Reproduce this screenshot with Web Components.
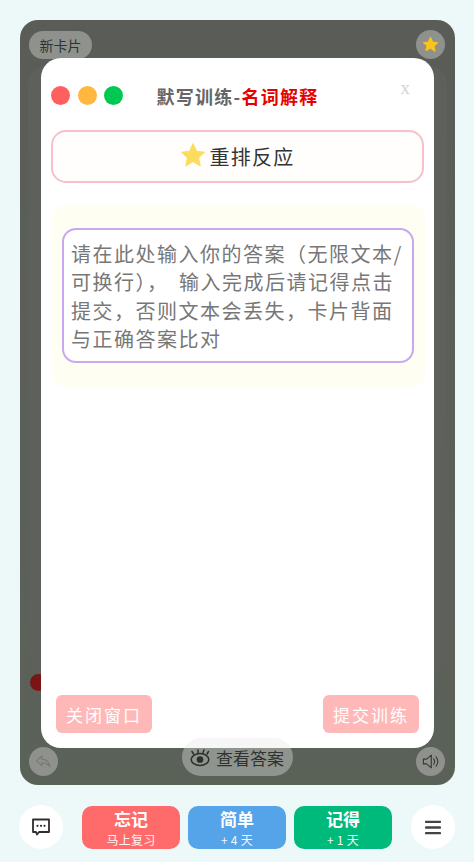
<!DOCTYPE html>
<html lang="zh"><head><meta charset="utf-8"><title>默写训练</title>
<style>
html,body{margin:0;padding:0;background:#edf9f8}
body{font-family:"Noto Sans CJK SC","Noto Sans",sans-serif}
</style></head><body>
<x-screen>
  <x-card>
    <x-chip slot="tl" wide>新卡片</x-chip>
    <x-chip slot="tr"><svg width="17" height="17" viewBox="0 0 24 24"><path d="M12 2l3 6.6 7.2.8-5.3 4.9 1.5 7.1L12 17l-6.4 3.4 1.5-7.1L1.800 9.400 9 8.600z" fill="#fcc419" stroke="#fcc419" stroke-width="1.500" stroke-linejoin="round"/></svg></x-chip>
    <x-chip slot="bl"><svg width="19" height="19" viewBox="0 0 24 24" fill="none" stroke="#777c78" stroke-width="1.500" stroke-linejoin="round" stroke-linecap="round"><path d="M10 5L3 11.500 10 17v-3.500c4.500 0 7.500 1.500 10 5.500-.5-5.500-3.500-9.500-10-10z"/></svg></x-chip>
    <x-answer slot="bc"><svg style="margin-top:2px" width="20" height="18" viewBox="0 0 20 18" fill="none" stroke="#2c2f2c" stroke-width="1.500" stroke-linecap="round"><ellipse cx="10" cy="10.500" rx="8.800" ry="6"/><circle cx="10" cy="10.500" r="2.600" fill="#2c2f2c"/><path d="M3.500 5L2 2.500M8 3.800V1M13 3.800L14 1M17 5l1.500-2.500"/></svg>查看答案</x-answer>
    <x-chip slot="br"><svg width="19" height="19" viewBox="0 0 24 24" fill="none" stroke="#353835" stroke-width="1.400" stroke-linejoin="round" stroke-linecap="round"><path d="M3 9h4l6-5v16l-6-5H3z"/><path d="M16 8.500c1.400 2 1.400 5 0 7M19 6c2.600 3.500 2.600 8.500 0 12"/></svg></x-chip>
    <x-modal slot="modal">
      <span slot="title">默写训练-<b>名词解释</b></span>
      <x-prompt slot="prompt">重排反应</x-prompt>
      <x-answer-box slot="body">请在此处输入你的答案（无限文本/<br>可换行），<span style="letter-spacing:.5px">&#8194;</span>输入完成后请记得点击<br>提交，否则文本会丢失，卡片背面<br>与正确答案比对</x-answer-box>
      <x-soft-btn slot="foot">关闭窗口</x-soft-btn>
      <x-soft-btn slot="foot">提交训练</x-soft-btn>
    </x-modal>
  </x-card>
  <x-dock>
    <x-round slot="left"><svg width="20" height="20" viewBox="0 0 20 20" fill="none"><path d="M2 2.500h16v12.500H8l-2 2.500-1-2.500H2z" stroke="#2e2e2e" stroke-width="1.800" stroke-linejoin="round"/><circle cx="6.500" cy="8.800" r="1.100" fill="#2e2e2e"/><circle cx="10" cy="8.800" r="1.100" fill="#2e2e2e"/><circle cx="13.500" cy="8.800" r="1.100" fill="#2e2e2e"/></svg></x-round>
    <x-rate style="--c:#ff6b6b" label="忘记" sub="马上复习"></x-rate>
    <x-rate style="--c:#55a3e8" label="简单" sub="+ 4 天"></x-rate>
    <x-rate style="--c:#00ba7c" label="记得" sub="+ 1 天"></x-rate>
    <x-round slot="right"><svg width="16" height="15" viewBox="0 0 16 15"><path d="M1 1.800h14M1 7.500h14M1 13.200h14" stroke="#444" stroke-width="2.300" stroke-linecap="round"/></svg></x-round>
  </x-dock>
</x-screen>
<script>
function def(name, css, html, init){
  customElements.define(name, class extends HTMLElement{
    constructor(){super();const r=this.attachShadow({mode:"open"});r.innerHTML="<style>"+css+"</style>"+html;}
    connectedCallback(){ if(init) init(this); }
  });
}
def("x-screen",":host{display:flex;flex-direction:column;box-sizing:border-box;width:474px;height:862px;padding-top:20px;gap:20px;overflow:hidden;background:#edf9f8}","<slot></slot>");
def("x-card",`:host{display:flex;flex-direction:column;justify-content:space-between;position:relative;box-sizing:border-box;width:435px;height:765px;margin-left:19.500px;padding:10px 9.500px 9px 9.500px;border-radius:18px;background:linear-gradient(#5a5d57,#5c605a 75%,#5a6258)}
.row{display:flex;justify-content:space-between;align-items:flex-end;position:relative}
.inner{position:absolute;left:8px;right:8px;top:46px;bottom:110px;border-radius:18px;background:#5e605b}
.dot{position:absolute;left:10.500px;top:654px;width:17px;height:17px;border-radius:50%;background:#7b1414}
.modal{position:absolute;display:flex;left:21.500px;right:20.500px;top:38px;bottom:37px}
.modal ::slotted(*){flex:1}
.top{z-index:1}.bottom{z-index:3}`,
`<div class="inner"></div><div class="dot"></div>
<div class="row top"><slot name="tl"></slot><slot name="tr"></slot></div>
<div class="modal" style="z-index:2"><slot name="modal"></slot></div>
<div class="row bottom"><slot name="bl"></slot><slot name="bc"></slot><slot name="br"></slot></div>`);
def("x-chip",`:host{display:flex;align-items:center;justify-content:center;width:29px;height:29px;border-radius:15px;background:#8f918d;color:#2f322f;font-size:14px;line-height:1}
:host([wide]){width:63px;height:28px}`,"<slot></slot>");
def("x-answer",`:host{display:flex;align-items:center;justify-content:center;gap:6px;width:111px;height:38px;border-radius:19px;background:rgba(231,231,231,.376);color:#2f322f;font-size:17px;line-height:1;margin-left:0}`,"<slot></slot>");
def("x-modal",`:host{display:flex;flex-direction:column;box-sizing:border-box;background:#fff;border-radius:20px;padding:27px 10px 15px 10px;min-width:0}
header{display:grid;grid-template-columns:1fr auto 1fr;align-items:center;height:20px}
.dots{display:flex;gap:7.500px}
.dots i{width:19px;height:19px;border-radius:50%}
.title{font-size:18px;font-weight:700;color:#666;letter-spacing:1.250px;line-height:20px;white-space:nowrap;margin-top:1px}
.x{justify-self:end;margin:-15px 14px 0 0;font:19px "Liberation Serif",serif;color:#d4d4d4}
.prompt{margin-top:25px}
.panel{margin:22px -2px 0 1px;padding:23px 12px 24px 10px;border-radius:14px;background:#fffef2}
footer{margin-top:auto;display:flex;justify-content:space-between;padding:0 5px}`,
`<header><div class="dots"><i style="background:#ff5f5f"></i><i style="background:#ffb740"></i><i style="background:#00c853"></i></div><div class="title"><slot name="title"></slot></div><div class="x">x</div></header>
<div class="prompt"><slot name="prompt"></slot></div>
<div class="panel"><slot name="body"></slot></div>
<footer><slot name="foot"></slot></footer>`);
def("x-prompt",`:host{display:flex;align-items:center;justify-content:center;box-sizing:border-box;height:53px;border:2px solid #f7c1c9;border-radius:15px;background:#fffefd;font-size:20px;letter-spacing:1.300px;color:#333;line-height:1}
svg{margin-right:3px;margin-top:-3px}`,
`<svg width="26" height="26" viewBox="0 0 24 24"><path d="M12 1.500l3.200 7 7.300.9-5.400 5 1.500 7.500L12 18.100 5.400 21.900l1.500-7.500-5.400-5 7.300-.9z" fill="#fbdc5f" stroke="#fbdc5f" stroke-linejoin="round"/></svg><slot></slot>`);
def("x-answer-box",`:host{display:block;box-sizing:border-box;height:135px;padding:10px 0 0 7px;border:2px solid #c9a9ec;border-radius:14px;background:#fff;color:#777;font-size:20px;line-height:28.400px;letter-spacing:1.500px;white-space:nowrap;overflow:hidden}`,"<slot></slot>");
def("x-soft-btn",`:host{display:flex;align-items:center;justify-content:center;width:96px;height:38px;border-radius:6px;background:#ffb8b8;color:#fff;font-size:17px;letter-spacing:2px;line-height:1}`,"<slot></slot>");
def("x-dock",`:host{display:flex;align-items:center;padding-left:19px;gap:8px;height:44px}
::slotted([slot=left]){margin-right:11px}::slotted([slot=right]){margin-left:11px}`,
`<slot name="left"></slot><slot></slot><slot name="right"></slot>`);
def("x-round",`:host{display:flex;align-items:center;justify-content:center;width:44px;height:44px;border-radius:50%;background:#fff}`,"<slot></slot>");
def("x-rate",`:host{display:flex;flex-direction:column;align-items:center;justify-content:flex-start;box-sizing:border-box;width:98px;height:43px;border-radius:10px;background:var(--c);color:#fff}
.a{font-size:17px;font-weight:700;line-height:normal}.b{font-size:12px;line-height:normal;letter-spacing:.3px;opacity:.92}`,
`<div class="a"></div><div class="b"></div>`,el=>{
  el.shadowRoot.querySelector(".a").textContent=el.getAttribute("label");
  el.shadowRoot.querySelector(".b").textContent=el.getAttribute("sub");
});
</script>
<style>x-modal b{color:#e60000;font-weight:700}</style>
</body></html>
